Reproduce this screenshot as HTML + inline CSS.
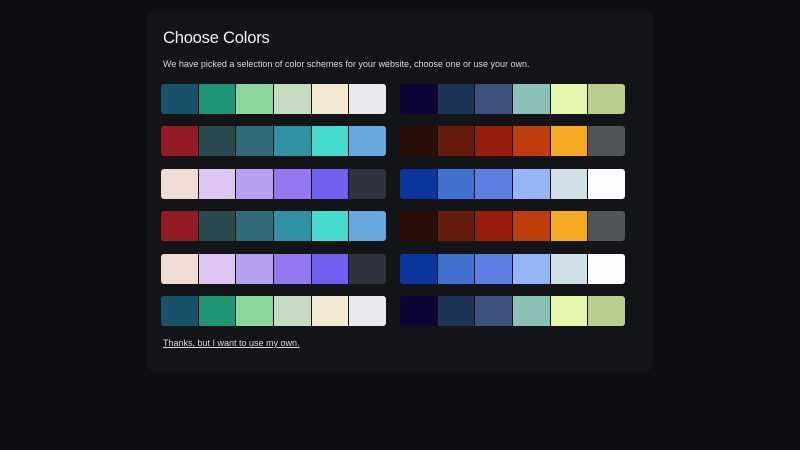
<!DOCTYPE html>
<html><head><style>
body{margin:0;width:800px;height:450px;background:#0e0f12;font-family:"Liberation Sans",sans-serif;position:relative;overflow:hidden}
.card{position:absolute;left:147px;top:11px;width:506px;height:361px;background:#131417;border-radius:8px}
h1{position:absolute;left:163px;top:29px;margin:0;font-weight:normal;font-size:16.5px;color:#f0f0f0;letter-spacing:-0.2px}
p{position:absolute;left:163px;top:59px;margin:0;font-size:9px;color:#d8d8d8}
a{position:absolute;left:163px;top:338px;font-size:9px;color:#d8d8d8;text-decoration:underline}
.pal{position:absolute;width:225px;height:30px;display:flex;border-radius:3px;overflow:hidden;gap:1px;background:#111}
.pal div{flex:1}
</style></head><body>
<div class="card"></div>
<h1>Choose Colors</h1>
<p>We have picked a selection of color schemes for your website, choose one or use your own.</p>
<div id="w"></div>
<a>Thanks, but I want to use my own.</a>
<script>
var A=["#17526a","#1e9676","#8ad69c","#c7dbc2","#f3e8d2","#e9eaee"],
B=["#0d0538","#1c3556","#3d507e","#8bc0b6","#e6f8ad","#b7ce8f"],
C=["#921b26","#2b4a4f","#326b78","#2f91a2","#45dbcd","#68a8df"],
D=["#2a0d07","#661c0d","#971d0e","#bf3c0d","#f6ab22","#4f5558"],
E=["#f0dcd3","#dcc5f2","#b5a0ef","#9478ef","#715ff0","#30333d"],
F=["#0c35a0","#4171d0","#5d7ee3","#95b5f6","#d1dfe6","#fdfdff"];
var rows=[[A,B],[C,D],[E,F],[C,D],[E,F],[A,B]],ys=[84,126,169,211,254,296],h="";
rows.forEach(function(r,i){[161,400].forEach(function(x,j){h+='<div class="pal" style="left:'+x+'px;top:'+ys[i]+'px">'+r[j].map(function(c){return '<div style="background:'+c+'"></div>'}).join('')+'</div>'})});
document.getElementById('w').innerHTML=h;
</script>
</body></html>
